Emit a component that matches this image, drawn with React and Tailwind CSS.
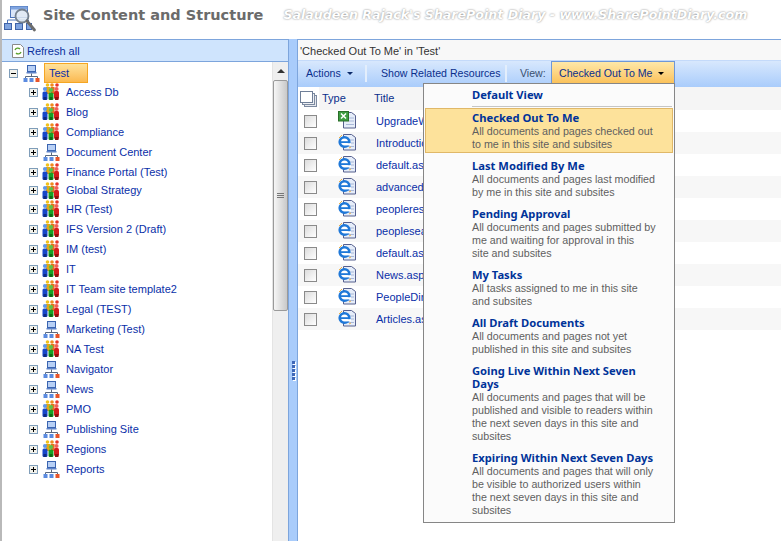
import React from 'react';

const sites = [
  { name: 'Access Db', icon: 'team' },
  { name: 'Blog', icon: 'team' },
  { name: 'Compliance', icon: 'team' },
  { name: 'Document Center', icon: 'net' },
  { name: 'Finance Portal (Test)', icon: 'team' },
  { name: 'Global Strategy', icon: 'team', short: true },
  { name: 'HR (Test)', icon: 'team' },
  { name: 'IFS Version 2 (Draft)', icon: 'team' },
  { name: 'IM (test)', icon: 'team' },
  { name: 'IT', icon: 'team' },
  { name: 'IT Team site template2', icon: 'team' },
  { name: 'Legal (TEST)', icon: 'team' },
  { name: 'Marketing (Test)', icon: 'net' },
  { name: 'NA Test', icon: 'team' },
  { name: 'Navigator', icon: 'net' },
  { name: 'News', icon: 'net' },
  { name: 'PMO', icon: 'team' },
  { name: 'Publishing Site', icon: 'net' },
  { name: 'Regions', icon: 'team' },
  { name: 'Reports', icon: 'net' },
];

const docs = [
  { title: 'UpgradeWiz', type: 'xls' },
  { title: 'Introduction', type: 'ie' },
  { title: 'default.aspx', type: 'ie' },
  { title: 'advanced.aspx', type: 'ie' },
  { title: 'peopleresults', type: 'ie' },
  { title: 'peoplesearch', type: 'ie' },
  { title: 'default.aspx', type: 'ie' },
  { title: 'News.aspx', type: 'ie' },
  { title: 'PeopleDirectory', type: 'ie' },
  { title: 'Articles.aspx', type: 'ie' },
];

const views = [
  { title: 'Checked Out To Me', lines: ['All documents and pages checked out', 'to me in this site and subsites'], active: true },
  { title: 'Last Modified By Me', lines: ['All documents and pages last modified', 'by me in this site and subsites'] },
  { title: 'Pending Approval', lines: ['All documents and pages submitted by', 'me and waiting for approval in this', 'site and subsites'] },
  { title: 'My Tasks', lines: ['All tasks assigned to me in this site', 'and subsites'] },
  { title: 'All Draft Documents', lines: ['All documents and pages not yet', 'published in this site and subsites'] },
  { title: ['Going Live Within Next Seven', 'Days'], lines: ['All documents and pages that will be', 'published and visible to readers within', 'the next seven days in this site and', 'subsites'] },
  { title: 'Expiring Within Next Seven Days', lines: ['All documents and pages that will only', 'be visible to authorized users within', 'the next seven days in this site and', 'subsites'] },
];

const TeamIcon = () => (
  <svg width="18" height="18" viewBox="0 0 18 18" className="shrink-0">
    <circle cx="5.5" cy="2" r="1.8" fill="#f2c21a" />
    <circle cx="10" cy="2" r="1.8" fill="#f08a1c" />
    <circle cx="15" cy="2" r="1.8" fill="#e8342a" />
    <rect x="4" y="4" width="4" height="7" fill="#e0a818" />
    <rect x="8.5" y="4" width="4" height="7" fill="#e0721c" />
    <circle cx="3" cy="6" r="2.1" fill="#5f97ea" />
    <circle cx="9" cy="7" r="2.1" fill="#58c24a" />
    <circle cx="14.5" cy="6" r="2.1" fill="#f0605a" />
    <rect x="12" y="8" width="5" height="8" rx="1.5" fill="#d41c1c" />
    <rect x="13" y="14" width="3.5" height="3" fill="#8e1010" />
    <rect x="0.5" y="8.5" width="5" height="8.5" rx="1.5" fill="#1746c8" />
    <rect x="1.5" y="14" width="3" height="3" fill="#0e2a80" />
    <rect x="6.5" y="9.5" width="5" height="7.5" rx="1.5" fill="#17a024" />
    <rect x="7.5" y="14" width="3" height="3" fill="#0d6a16" />
  </svg>
);

const NetIcon = () => (
  <svg width="17" height="17" viewBox="0 0 17 17" className="shrink-0">
    <rect x="4.5" y="0.5" width="8" height="6" fill="#b8d0f5" stroke="#3a64b0" />
    <rect x="3.5" y="7" width="10" height="1.5" fill="#5c82c8" />
    <path d="M8.5 8.5v3M2.5 13v-1.5h12V13" fill="none" stroke="#5a6a80" />
    <rect x="0.5" y="13" width="4" height="4" fill="#5b8be0" />
    <rect x="6.5" y="13" width="4" height="4" fill="#5b8be0" />
    <rect x="12.5" y="13" width="4" height="4" fill="#e8552a" />
  </svg>
);

const Toggle = ({ minus }) => (
  <span className="w-[9px] h-[9px] border border-[#7f9db9] bg-[#f2f2ec] flex items-center justify-center shrink-0 relative">
    <span className="w-[5px] h-px bg-black" />
    {!minus && <span className="w-px h-[5px] bg-black absolute" />}
  </span>
);

const Doc = ({ children }) => (
  <svg width="18" height="18" viewBox="0 0 18 18" className="shrink-0">
    <path d="M5.5 1.5h8l4 3v12.5h-12z" fill="#e6edf9" stroke="#56608e" />
    <path d="M11 7h5M11 10h5M8 13.500h8" stroke="#a8b8d8" />
    {children}
  </svg>
);

const IeIcon = () => (
  <Doc>
    <circle cx="6.500" cy="9" r="4.800" fill="#fff" stroke="#1f78d8" strokeWidth="2.600" />
    <path d="M2 8.200h9v1.800H2z" fill="#1f78d8" />
    <rect x="7.500" y="10.200" width="5.500" height="2.200" fill="#fff" />
    <path d="M1 5l3-3M11 15l2-1" stroke="#e8a020" strokeWidth="0.800" />
  </Doc>
);

const XlsIcon = () => (
  <Doc>
    <rect x="0.500" y="0.500" width="10" height="9.500" fill="#3c9c40" stroke="#2a6e2a" />
    <path d="M3 2.500l5 5M8 2.500l-5 5" stroke="#fff" strokeWidth="1.500" />
  </Doc>
);

const Caret = ({ color = 'border-t-[#0b2a6b]' }) => (
  <span className={`inline-block w-0 h-0 border-x-[3px] border-x-transparent border-t-[3px] ${color}`} />
);

export default function App() {
  return (
    <div className="font-['Liberation_Sans',sans-serif] w-[781px] h-[541px] overflow-hidden relative bg-white border-l-2 border-[#b9b9b9] text-[11px] flex flex-col">
      {/* page header */}
      <header className="h-[39px] shrink-0 flex items-start">
        <svg width="34" height="30" viewBox="0 0 34 30" className="ml-[2px] mt-[4px] shrink-0">
          <rect x="6.500" y="2.500" width="17" height="11" fill="#d9e5f8" stroke="#4d74b8" />
          <rect x="6.500" y="2.500" width="17" height="3" fill="#7fa4e0" />
          <path d="M15 13v3M3.500 19v-3h21v3" fill="none" stroke="#4d74b8" />
          <rect x="0.500" y="19.500" width="7" height="6" fill="#7fa4e0" stroke="#3f63a8" />
          <rect x="11.500" y="19.500" width="7" height="6" fill="#7fa4e0" stroke="#3f63a8" />
          <rect x="22.500" y="19.500" width="5" height="6" fill="#7fa4e0" stroke="#3f63a8" />
          <circle cx="18" cy="12" r="6.500" fill="#e2ebf5" fillOpacity="0.85" stroke="#75818e" strokeWidth="1.800" />
          <path d="M23 17l7.500 9" stroke="#6d6d6d" strokeWidth="2.800" strokeLinecap="round" />
        </svg>
        <h1 className="ml-[5px] mt-[5px] font-['DejaVu_Sans',sans-serif] font-bold text-[14.5px] leading-[20px] text-[#6b6b6b] whitespace-nowrap">Site Content and Structure</h1>
        <span className="ml-[20px] mt-[6px] font-['DejaVu_Sans',sans-serif] font-bold italic text-[12.6px] leading-[18px] text-white whitespace-nowrap [text-shadow:0_0_2px_#777]">Salaudeen Rajack's SharePoint Diary - www.SharePointDiary.com</span>
      </header>

      <div className="flex-1 flex min-h-0">
        {/* left tree */}
        <aside className="w-[286px] shrink-0 flex flex-col">
          <div className="h-[23px] shrink-0 bg-[#cfe4fd] border-y border-[#7da5dc] flex items-center pl-[10px] pt-[2px] gap-[3px] text-[#0a2f9c]">
            <svg width="12" height="14" viewBox="0 0 12 14" className="shrink-0 -mt-[2px]">
              <path d="M0.500 0.500h8l3 3v10h-11z" fill="#fff" stroke="#8a8a8a" />
              <path d="M3 6a3 3 0 0 1 5-1M9 8a3 3 0 0 1-5 1" fill="none" stroke="#5aa02c" strokeWidth="1.300" />
            </svg>
            Refresh all
          </div>
          <div className="flex-1 flex min-h-0">
            <div className="flex-1 text-[#0a2fa8]">
              <div className="flex items-center h-[20px] pl-[7px] mt-[1px]">
                <Toggle minus />
                <span className="ml-[5px]"><NetIcon /></span>
                <span className="ml-[4px] w-[44px] h-[20px] border border-[#f5a623] bg-gradient-to-b from-[#fee29a] to-[#fbb94f] pl-[4px] flex items-center">Test</span>
              </div>
              <ul className="-mt-px">
                {sites.map((s) => (
                  <li key={s.name} className={`flex items-center pl-[27px] gap-[4px] ${s.short ? 'h-[17px]' : 'h-[20px]'}`}>
                    <Toggle />
                    {s.icon === 'team' ? <TeamIcon /> : <span className="w-[18px] flex justify-center"><NetIcon /></span>}
                    <span className="ml-[2px] whitespace-nowrap">{s.name}</span>
                  </li>
                ))}
              </ul>
            </div>
            {/* scrollbar */}
            <div className="w-[16px] shrink-0 bg-[#efefef] flex flex-col items-center border-l border-[#e4e4e4]">
              <div className="h-[18px] flex items-center">
                <span className="w-0 h-0 border-x-[4px] border-x-transparent border-b-[4px] border-b-[#333]" />
              </div>
              <div className="w-[15px] h-[231px] border border-[#9a9a9a] rounded-[2px] bg-gradient-to-r from-[#f6f6f6] to-[#c9c9c9] flex flex-col items-center justify-center gap-px">
                <span className="w-[7px] h-px bg-[#777]" />
                <span className="w-[7px] h-px bg-[#777]" />
                <span className="w-[7px] h-px bg-[#777]" />
              </div>
            </div>
          </div>
        </aside>

        {/* splitter */}
        <div className="w-[10px] shrink-0 bg-[#a9ccfb] border-x border-[#7da5dc] flex flex-col items-center justify-center gap-[1px] pt-[160px]">
          {[0, 1, 2, 3, 4].map((i) => (
            <span key={i} className="w-[3px] h-[3px] bg-[#3f68b8] shadow-[1px_1px_0_#fff]" />
          ))}
        </div>

        {/* right list */}
        <main className="flex-1 min-w-0 flex flex-col">
          <div className="h-[21px] shrink-0 bg-[#f8f8f8] border-t border-[#7da5dc] flex items-center pl-[2px] pt-[2px] text-[#333]">'Checked Out To Me' in 'Test'</div>
          <div className="h-[27px] shrink-0 bg-gradient-to-b from-[#d8e8fd] to-[#a9ccfb] flex items-start text-[10.6px] text-[#0a2f8c] border-t border-[#c4dafa]">
            <span className="ml-[8px] mt-[4px] w-[61px] flex items-center gap-[6px] border-r-2 border-[#e3eefc] h-[17px]">Actions <Caret /></span>
            <span className="ml-[14px] mt-[4px] w-[126px] whitespace-nowrap border-r-2 border-[#e3eefc] h-[17px] flex items-center">Show Related Resources</span>
            <span className="ml-[13px] mt-[4px] w-[31px] h-[17px] flex items-center text-[#39506f]">View:</span>
            <span className="w-[124px] h-[22px] pl-[7px] pt-[2px] flex items-center gap-[6px] border border-[#6f97d6] border-b-0 bg-gradient-to-b from-[#fee8a8] to-[#fbc25a] whitespace-nowrap">
              Checked Out To Me <Caret color="border-t-black" />
            </span>
          </div>

          <div className="h-[23px] shrink-0 flex items-center text-[#0a2f8c] bg-[#f5f5f5]">
            <span className="w-[21px] h-full bg-white flex items-center shrink-0 pl-[2px]">
              <svg width="17" height="16" viewBox="0 0 17 16" className="shrink-0">
                <rect x="4.500" y="4.500" width="12" height="11" fill="#e6e8ee" stroke="#7c8aa0" />
                <rect x="2.500" y="2.500" width="12" height="11" fill="#eef0f4" stroke="#7c8aa0" />
                <rect x="0.500" y="0.500" width="12" height="11" fill="#fff" stroke="#6f7f98" />
              </svg>
            </span>
            <span className="ml-[3px] w-[52px]">Type</span>
            <span>Title</span>
          </div>

          <ul>
            {docs.map((d, i) => (
              <li key={i} className={`h-[22px] flex items-center text-[#0a2fa8] ${i % 2 === 1 ? 'bg-[#f7f7f7]' : 'bg-white'}`}>
                <span className="ml-[6px] w-[13px] h-[13px] border border-[#8a8a8a] bg-gradient-to-br from-[#dcdcdc] to-white shrink-0" />
                <span className="ml-[21px] w-[38px] -mt-[3px]">{d.type === 'xls' ? <XlsIcon /> : <IeIcon />}</span>
                <span className="whitespace-nowrap">{d.title}</span>
              </li>
            ))}
          </ul>
        </main>
      </div>

      {/* view dropdown */}
      <div className="absolute left-[421px] top-[83px] w-[252px] h-[440px] bg-[#fbfbfb] border border-[#868686] p-px">
        <div className="ml-[47px] mr-px h-[22px] border-b border-[#c5c5c5] font-bold font-['Noto_Sans',sans-serif] text-[11.2px] text-[#003399] flex items-center">Default View</div>
        <ul>
          {views.map((v, i) => (
            <li key={i} className={`pl-[46px] pr-[3px] text-[10.7px] leading-[13px] border ${v.active ? 'bg-[#fde29b] border-[#e0b868] mt-px mb-[3px] pt-[2px] pb-px' : 'border-transparent pt-[2px] pb-[2px] mt-[2px]'}`}>
              <div className="font-bold font-['Noto_Sans',sans-serif] text-[11.2px] text-[#003399] leading-[13px] mb-px">
                {Array.isArray(v.title) ? v.title.map((t) => <div key={t}>{t}</div>) : v.title}
              </div>
              {v.lines.map((l) => (
                <div key={l} className="text-[#5f5f5f] whitespace-nowrap">{l}</div>
              ))}
            </li>
          ))}
        </ul>
      </div>
    </div>
  );
}
